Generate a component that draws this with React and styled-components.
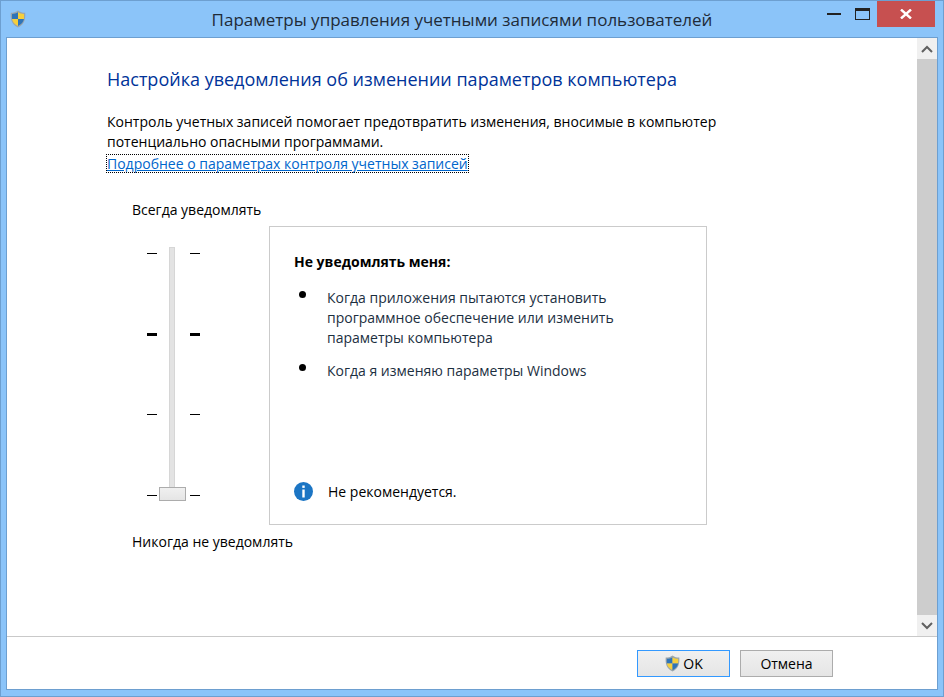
import React from 'react';
import styled, { createGlobalStyle } from 'styled-components';

const FONT = '"Open Sans", "Noto Sans", "Liberation Sans", sans-serif';

const GlobalStyle = createGlobalStyle`
html, body {
  margin: 0;
  padding: 0;
  background: #8bc4f9;
}
`;

const Frame = styled.div`
box-sizing: border-box;
width: 944px;
height: 697px;
display: flex;
flex-direction: column;
background: #8bc4f9;
border: 1px solid #6d9fd0;
font-family: ${FONT};
color: #000;
overflow: hidden;
`;

const TitleBar = styled.div`
height: 36px;
flex: none;
display: grid;
grid-template-columns: 60px 1fr 132px;
align-items: center;
`;

const TitleIcon = styled.div`
display: flex;
padding-left: 8px;
`;

const TitleText = styled.div`
font-size: 17px;
color: #1f2b38;
text-align: center;
padding-left: 52px;
`;

const WindowControls = styled.div`
display: flex;
align-self: start;
justify-content: flex-end;
padding-right: 8px;
`;

const ControlButton = styled.div`
width: ${props => props.wide ? '58px' : '29px'};
height: 26px;
display: flex;
align-items: center;
justify-content: center;
background: ${props => props.wide ? '#c75050' : 'transparent'};
`;

const Client = styled.div`
flex: 1;
display: flex;
flex-direction: column;
margin: 0 5px 6px 5px;
background: #fff;
border: 1px solid #6d9fd0;
min-height: 0;
`;

const Main = styled.div`
flex: 1;
display: flex;
min-height: 0;
`;

const Content = styled.div`
flex: 1;
padding: 28px 0 0 100px;
`;

const Heading = styled.h1`
margin: 0 0 20px;
font-size: 18px;
font-weight: 400;
line-height: 26px;
color: #003399;
white-space: nowrap;
`;

const Paragraph = styled.p`
margin: 0;
font-size: 14px;
line-height: 20px;
white-space: nowrap;
`;

const MoreLink = styled.a`
display: inline-block;
font-size: 14px;
line-height: 17px;
color: #0066cc;
text-decoration: underline;
outline: 1px dotted #000;
outline-offset: 0;
white-space: nowrap;
`;

const Level = styled.div`
font-size: 14px;
line-height: 20px;
padding-left: 25px;
white-space: nowrap;
`;

const SliderRow = styled.div`
display: flex;
margin: 6px 0 7px;
`;

const SliderBox = styled.div`
position: relative;
width: 162px;
height: 299px;
`;

const Track = styled.div`
position: absolute;
left: 62px;
top: 21px;
width: 6px;
height: 254px;
background: #e3e3e3;
border: 1px solid #d6d6d6;
box-sizing: border-box;
`;

const TickRows = styled.div`
box-sizing: border-box;
height: 100%;
padding: 27px 0 0 40px;
display: grid;
grid-template-rows: repeat(3, 80.5px) auto;
`;

const TickRow = styled.div`
display: grid;
grid-template-columns: 10px 10px;
column-gap: 33px;
`;

const Tick = styled.span`
display: block;
height: ${props => props.major ? '3px' : '1px'};
margin-top: ${props => props.major ? '-1px' : '0'};
background: #000;
`;

const Thumb = styled.div`
position: absolute;
left: 52px;
top: 261px;
box-sizing: border-box;
width: 27px;
height: 14px;
border: 1px solid #acacac;
background: linear-gradient(#f0f0f0, #e5e5e5);
`;

const InfoPanel = styled.div`
box-sizing: border-box;
width: 438px;
height: 299px;
border: 1px solid #cbcbcb;
padding: 25px 24px 0;
display: flex;
flex-direction: column;
`;

const PanelTitle = styled.div`
font-size: 14px;
font-weight: 700;
line-height: 20px;
`;

const BulletList = styled.ul`
list-style: none;
margin: 16px 0 0;
padding: 0;
flex: 1;
`;

const BulletItem = styled.li`
position: relative;
padding-left: 33px;
margin-bottom: 13px;
font-size: 14px;
line-height: 20px;
color: #1c2f3f;

&::before {
  content: '';
  position: absolute;
  left: 5px;
  top: 3px;
  width: 7px;
  height: 7px;
  border-radius: 50%;
  background: #000;
}
`;

const Notice = styled.div`
display: flex;
align-items: center;
gap: 15px;
height: 22px;
margin-bottom: 22px;
font-size: 14px;
`;

const Scrollbar = styled.div`
width: 20px;
flex: none;
display: flex;
flex-direction: column;
background: #f0f0f0;
`;

const ScrollArrow = styled.div`
height: 21px;
flex: none;
display: flex;
align-items: center;
justify-content: center;
`;

const ScrollThumb = styled.div`
flex: 1;
background: #cdcdcd;
`;

const Footer = styled.div`
flex: none;
height: 53px;
border-top: 1px solid #c9c9c9;
display: flex;
gap: 10px;
justify-content: flex-end;
padding: 13px 104px 0 0;
box-sizing: border-box;
`;

const DialogButton = styled.button`
box-sizing: border-box;
width: 93px;
height: 27px;
display: flex;
align-items: center;
justify-content: center;
gap: 2px;
padding: 0;
border: 1px solid ${props => props.primary ? '#3399ff' : '#acacac'};
background: linear-gradient(#f0f0f0, #e5e5e5);
font-family: ${FONT};
font-size: 14px;
color: #000;
`;

const Shield = ({ size }) => (
  <svg width={size} height={size} viewBox="0 0 20 20">
    <path d="M10 .5C7.5 2.300 5 3 2 3c-.5 6.500.5 13 8 16.500C17.500 16 18.500 9.500 18 3c-3 0-5.500-.7-8-2.500z" fill="#9aa5ad" />
    <path d="M10 2.500V10H3.400C3.200 8 3.200 6.300 3.400 4.500 5.800 4.300 8 3.700 10 2.500z" fill="#2f74b8" />
    <path d="M10 2.500c2 1.200 4.200 1.800 6.600 2 .2 1.800.2 3.500 0 5.500H10z" fill="#f6cf3c" />
    <path d="M3.400 10H10v7.800C6 15.700 4 13.200 3.400 10z" fill="#f6cf3c" />
    <path d="M16.600 10c-.6 3.200-2.600 5.700-6.600 7.800V10z" fill="#2f74b8" />
  </svg>
);

const InfoIcon = () => (
  <svg width="19" height="19" viewBox="0 0 19 19">
    <circle cx="9.500" cy="9.500" r="9.500" fill="#1b75c4" />
    <rect x="8.300" y="3.500" width="2.400" height="2.400" fill="#fff" />
    <rect x="8.300" y="7.500" width="2.400" height="8" fill="#fff" />
  </svg>
);

const Chevron = ({ down }) => (
  <svg width="12" height="8" viewBox="0 0 12 8">
    <path d={down ? 'M1 1l5 5 5-5' : 'M1 7l5-5 5 5'} fill="none" stroke="#606060" strokeWidth="2" />
  </svg>
);

const TICKS = [false, true, false, false];

const BULLETS = [
  <>Когда приложения пытаются установить<br />программное обеспечение или изменить<br />параметры компьютера</>,
  'Когда я изменяю параметры Windows',
];

const App = () => (
  <>
    <GlobalStyle />
    <Frame>
      <TitleBar>
        <TitleIcon><Shield size={18} /></TitleIcon>
        <TitleText>Параметры управления учетными записями пользователей</TitleText>
        <WindowControls>
          <ControlButton>
            <svg width="14" height="2" viewBox="0 0 14 2"><rect width="14" height="2" fill="#222" /></svg>
          </ControlButton>
          <ControlButton>
            <svg width="15" height="12" viewBox="0 0 15 12">
              <rect x=".5" y=".5" width="14" height="11" fill="none" stroke="#222" />
              <rect width="15" height="3" fill="#222" />
            </svg>
          </ControlButton>
          <ControlButton wide>
            <svg width="12" height="10" viewBox="0 0 12 10">
              <path d="M1 .5l10 9M11 .5l-10 9" stroke="#fff" strokeWidth="2.400" />
            </svg>
          </ControlButton>
        </WindowControls>
      </TitleBar>
      <Client>
        <Main>
          <Content>
            <Heading>Настройка уведомления об изменении параметров компьютера</Heading>
            <Paragraph>
              Контроль учетных записей помогает предотвратить изменения, вносимые в компьютер
              <br />
              потенциально опасными программами.
            </Paragraph>
            <MoreLink>Подробнее о параметрах контроля учетных записей</MoreLink>
            <div style={{ height: 26 }} />
            <Level>Всегда уведомлять</Level>
            <SliderRow>
              <SliderBox>
                <Track />
                <TickRows>
                  {TICKS.map((major, i) => (
                    <TickRow key={i}>
                      <Tick major={major} />
                      <Tick major={major} />
                    </TickRow>
                  ))}
                </TickRows>
                <Thumb />
              </SliderBox>
              <InfoPanel>
                <PanelTitle>Не уведомлять меня:</PanelTitle>
                <BulletList>
                  {BULLETS.map((text, i) => <BulletItem key={i}>{text}</BulletItem>)}
                </BulletList>
                <Notice>
                  <InfoIcon />
                  Не рекомендуется.
                </Notice>
              </InfoPanel>
            </SliderRow>
            <Level>Никогда не уведомлять</Level>
          </Content>
          <Scrollbar>
            <ScrollArrow><Chevron /></ScrollArrow>
            <ScrollThumb />
            <ScrollArrow><Chevron down /></ScrollArrow>
          </Scrollbar>
        </Main>
        <Footer>
          <DialogButton primary><Shield size={17} />OK</DialogButton>
          <DialogButton>Отмена</DialogButton>
        </Footer>
      </Client>
    </Frame>
  </>
);

export default App;
